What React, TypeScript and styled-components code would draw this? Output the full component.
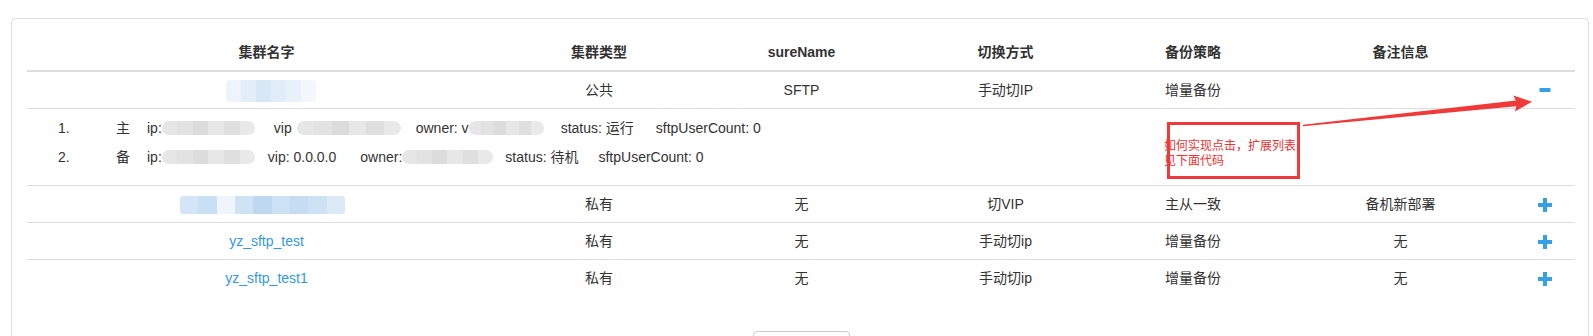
import React, { useState } from 'react';
import styled, { createGlobalStyle } from 'styled-components';

const GlobalStyle = createGlobalStyle`
  html, body {
    margin: 0;
    padding: 0;
    background: #fff;
  }
  body {
    font-family: "Liberation Sans", "Noto Sans CJK SC", Arial, sans-serif;
    font-size: 14px;
    color: #333;
    overflow: hidden;
  }
  *, *::before, *::after {
    box-sizing: border-box;
  }
`;

type Tone = 'pale' | 'sky' | 'gray';

const tones: Record<Tone, string[]> = {
  pale: ['#eef4fb', '#e4eef9', '#d8e7f6', '#e1edf8', '#e9f1fa', '#f4f8fc'],
  sky: ['#d3e5f6', '#c9dff4', '#f0f5fb', '#cfe3f5', '#bfd8f1', '#cde1f4', '#c5dcf2', '#cfe2f5', '#dce9f6'],
  gray: ['#e6e6e6', '#e2e2e2', '#dcdcdc', '#e7e7e7', '#dfdfdf', '#e9e9e9'],
};

const stripes = (cs: string[]) =>
  `linear-gradient(90deg, ${cs
    .map((c, i) => `${c} ${(i * 100) / cs.length}% ${((i + 1) * 100) / cs.length}%`)
    .join(', ')})`;

const Page = styled.div`
  position: relative;
  width: 1593px;
  height: 336px;
  padding: 18px 0 0 11px;
  overflow: hidden;
`;

const Panel = styled.section`
  width: 1578px;
  border: 1px solid #ddd;
  border-radius: 4px;
  padding: 15px 13px 20px 15px;
  background: #fff;
`;

const Table = styled.table`
  width: 1548px;
  table-layout: fixed;
  border-collapse: collapse;
  border-spacing: 0;
`;

const HeadCell = styled.th`
  padding: 8px;
  line-height: 20px;
  font-weight: 700;
  text-align: center;
  color: #333;
  border-bottom: 2px solid #ddd;
`;

const Cell = styled.td`
  padding: 8px;
  line-height: 20px;
  text-align: center;
  vertical-align: middle;
  border-top: 1px solid #ddd;
  white-space: nowrap;
`;

const NameLink = styled.a`
  color: #3499e0;
  text-decoration: none;
  cursor: pointer;
`;

/* blurred placeholder for values that are not shown */
const Mask = styled.span<{ $w: number; $h: number; $tone: Tone; $shift?: number }>`
  display: inline-block;
  width: ${(p) => p.$w}px;
  height: ${(p) => p.$h}px;
  margin: -4px 0 -4px ${(p) => p.$shift ?? 0}px;
  background: ${(p) => stripes(tones[p.$tone])};
  border-radius: ${(p) => (p.$tone === 'gray' ? p.$h / 2 : 3)}px;
  filter: blur(0.6px);
  vertical-align: middle;
`;

const ToggleButton = styled.button`
  display: inline-flex;
  border: 0;
  padding: 0;
  background: none;
  color: #35a0e6;
  cursor: pointer;
  vertical-align: middle;
`;

const DetailCell = styled.td`
  border-top: 1px solid #ddd;
  padding: 9px 8px 18px 31px;
  text-align: left;
`;

const NodeList = styled.ol`
  margin: 0;
  padding: 0;
  list-style: none;
  display: flex;
  flex-direction: column;
  gap: 9px;
`;

const NodeLine = styled.li`
  display: flex;
  align-items: center;
  height: 20px;
  line-height: 20px;
  white-space: nowrap;
`;

const Ordinal = styled.span`
  width: 58px;
`;

const Role = styled.span`
  width: 31px;
`;

const Field = styled.span<{ $gap: number }>`
  display: inline-flex;
  align-items: center;
  margin-left: ${(p) => p.$gap}px;
`;

const Footer = styled.div`
  display: flex;
  justify-content: center;
  padding-top: 35px;
`;

const PagerButton = styled.button`
  width: 97px;
  height: 34px;
  border: 1px solid #ccc;
  border-radius: 4px;
  background: #fff;
  font: inherit;
  color: #333;
`;

/* annotation layer drawn over the table */
const NoteText = styled.div`
  position: absolute;
  left: 1164px;
  top: 139px;
  font-size: 12px;
  line-height: 15px;
  color: #ee3030;
  white-space: nowrap;
`;

const NoteFrame = styled.div`
  position: absolute;
  left: 1167px;
  top: 122px;
  width: 133px;
  height: 57px;
  border: 3px solid #ee3a3a;
`;

const ArrowLayer = styled.svg`
  position: absolute;
  left: 1300px;
  top: 92px;
  overflow: visible;
  pointer-events: none;
`;

const PlusIcon = () => (
  <svg width="14" height="14" viewBox="0 0 14 14">
    <path d="M5 0h4v5h5v4H9v5H5V9H0V5h5z" fill="currentColor" />
  </svg>
);

const MinusIcon = () => (
  <svg width="14" height="14" viewBox="0 0 14 14">
    <rect x="1.5" y="4" width="11" height="4" fill="currentColor" />
  </svg>
);

type Part = { gap: number; text: string; mask?: number; maskGap?: number };
type Node = { role: string; parts: Part[] };

type Cluster = {
  id: number;
  name?: string;
  nameMask?: { w: number; h: number; tone: Tone; shift?: number };
  type: string;
  sureName: string;
  switchMode: string;
  backup: string;
  remark: string;
  nodes: Node[];
};

const clusters: Cluster[] = [
  {
    id: 1,
    nameMask: { w: 90, h: 22, tone: 'pale', shift: 8 },
    type: '公共',
    sureName: 'SFTP',
    switchMode: '手动切IP',
    backup: '增量备份',
    remark: '',
    nodes: [
      {
        role: '主',
        parts: [
          { gap: 0, text: 'ip:', mask: 93 },
          { gap: 19, text: 'vip', mask: 104, maskGap: 5 },
          { gap: 15, text: 'owner: v', mask: 75 },
          { gap: 17, text: 'status: 运行' },
          { gap: 22, text: 'sftpUserCount: 0' },
        ],
      },
      {
        role: '备',
        parts: [
          { gap: 0, text: 'ip:', mask: 93 },
          { gap: 13, text: 'vip: 0.0.0.0' },
          { gap: 24, text: 'owner:', mask: 91 },
          { gap: 12, text: 'status: 待机' },
          { gap: 20, text: 'sftpUserCount: 0' },
        ],
      },
    ],
  },
  {
    id: 2,
    nameMask: { w: 165, h: 18, tone: 'sky', shift: -8 },
    type: '私有',
    sureName: '无',
    switchMode: '切VIP',
    backup: '主从一致',
    remark: '备机新部署',
    nodes: [],
  },
  {
    id: 3,
    name: 'yz_sftp_test',
    type: '私有',
    sureName: '无',
    switchMode: '手动切ip',
    backup: '增量备份',
    remark: '无',
    nodes: [],
  },
  {
    id: 4,
    name: 'yz_sftp_test1',
    type: '私有',
    sureName: '无',
    switchMode: '手动切ip',
    backup: '增量备份',
    remark: '无',
    nodes: [],
  },
];

const columns = [
  { title: '集群名字', width: 479 },
  { title: '集群类型', width: 186 },
  { title: 'sureName', width: 219 },
  { title: '切换方式', width: 189 },
  { title: '备份策略', width: 186 },
  { title: '备注信息', width: 229 },
  { title: '', width: 60 },
];

export default function App() {
  const [open, setOpen] = useState<Record<number, boolean>>({ 1: true });
  const toggle = (id: number) => setOpen((s) => ({ ...s, [id]: !s[id] }));

  return (
    <>
      <GlobalStyle />
      <Page>
        <Panel>
          <Table>
            <colgroup>
              {columns.map((c, i) => (
                <col key={i} style={{ width: c.width }} />
              ))}
            </colgroup>
            <thead>
              <tr>
                {columns.map((c, i) => (
                  <HeadCell key={i}>{c.title}</HeadCell>
                ))}
              </tr>
            </thead>
            <tbody>
              {clusters.map((c) => (
                <React.Fragment key={c.id}>
                  <tr>
                    <Cell>
                      {c.nameMask ? (
                        <Mask $w={c.nameMask.w} $h={c.nameMask.h} $tone={c.nameMask.tone} $shift={c.nameMask.shift} />
                      ) : (
                        <NameLink>{c.name}</NameLink>
                      )}
                    </Cell>
                    <Cell>{c.type}</Cell>
                    <Cell>{c.sureName}</Cell>
                    <Cell>{c.switchMode}</Cell>
                    <Cell>{c.backup}</Cell>
                    <Cell>{c.remark}</Cell>
                    <Cell>
                      <ToggleButton onClick={() => toggle(c.id)} aria-label={open[c.id] ? '收起' : '展开'}>
                        {open[c.id] ? <MinusIcon /> : <PlusIcon />}
                      </ToggleButton>
                    </Cell>
                  </tr>
                  {open[c.id] && (
                    <tr>
                      <DetailCell colSpan={7}>
                        <NodeList>
                          {c.nodes.map((n, i) => (
                            <NodeLine key={i}>
                              <Ordinal>{i + 1}.</Ordinal>
                              <Role>{n.role}</Role>
                              {n.parts.map((p, j) => (
                                <Field key={j} $gap={p.gap}>
                                  {p.text}
                                  {p.mask && <Mask $w={p.mask} $h={14} $tone="gray" $shift={p.maskGap} />}
                                </Field>
                              ))}
                            </NodeLine>
                          ))}
                        </NodeList>
                      </DetailCell>
                    </tr>
                  )}
                </React.Fragment>
              ))}
            </tbody>
          </Table>
          <Footer>
            <PagerButton type="button" />
          </Footer>
        </Panel>

        <NoteText>
          如何实现点击，扩展列表
          <br />
          见下面代码
        </NoteText>
        <NoteFrame />
        <ArrowLayer width="236" height="37" viewBox="0 0 236 37">
          <polygon
            points="2.9,32.7 215.8,8.4 213.3,3.6 232,9.7 214.9,19.5 216.4,14.3 3.1,34.3"
            fill="#f03a3a"
          />
        </ArrowLayer>
      </Page>
    </>
  );
}
